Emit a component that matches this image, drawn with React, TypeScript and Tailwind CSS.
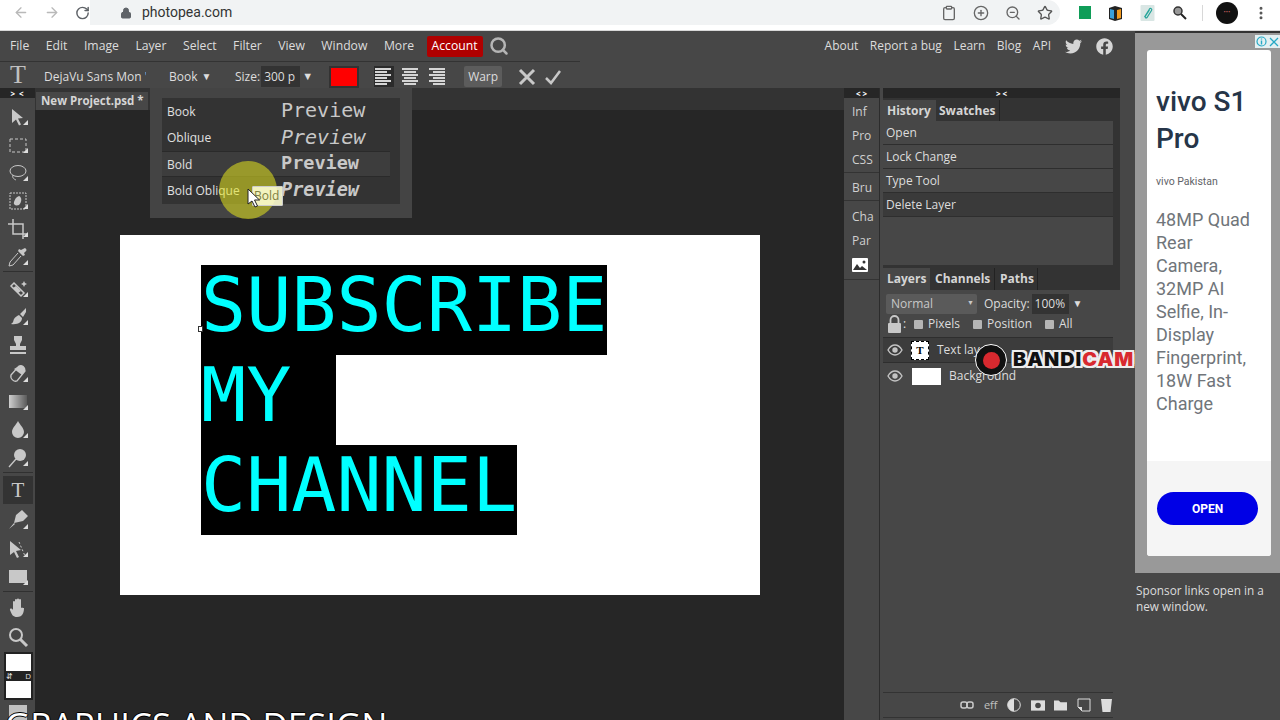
import React from "react";
import { ArrowLeft, ArrowRight, RotateCw, Lock, Clipboard, CirclePlus, ZoomOut, Star, EllipsisVertical, Search } from "lucide-react";
import { FaTwitter, FaFacebook } from "react-icons/fa";

const Corner = () => (
  <svg width="5" height="5" viewBox="0 0 5 5" className="absolute right-[5px] bottom-[6px]"><path d="M5 0V5H0Z" fill="#ddd" /></svg>
);

const Tool = ({ h = 28, mt = 0, corner = true, active = false, children }: { h?: number; mt?: number; corner?: boolean; active?: boolean; children: React.ReactNode }) => (
  <div style={{ height: h, marginTop: mt }} className={`relative w-[30px] ml-[3px] flex items-center justify-center ${active ? "bg-[#333333]" : ""}`}>
    <svg width="22" height="22" viewBox="0 0 22 22" fill="#c8c8c8">{children}</svg>
    {corner && <Corner />}
  </div>
);

const Sep = () => <div className="h-px bg-[#303030] w-[30px] ml-[3px]" />;

const menu = ["File", "Edit", "Image", "Layer", "Select", "Filter", "View", "Window", "More"];
const right = ["About", "Report a bug", "Learn", "Blog", "API"];

function AlignIcon({ type, dark }: { type: "l" | "c" | "r"; dark?: boolean }) {
  const rows = [16, 12, 16, 12, 16, 12];
  return (
    <div className={`w-[20px] h-[21px] flex flex-col justify-center gap-[1px] px-[1px] ${type === "l" ? "items-start" : type === "c" ? "items-center" : "items-end"} ${dark ? "bg-[#2b2b2b]" : ""}`}>
      {rows.map((w, i) => (
        <div key={i} style={{ width: w }} className="h-[2px] bg-[#d5d5d5]" />
      ))}
    </div>
  );
}

function Eye() {
  return (
    <svg width="16" height="12" viewBox="0 0 16 12" className="shrink-0">
      <path d="M1 6C3 2.5 5.5 1 8 1s5 1.500 7 5c-2 3.500-4.500 5-7 5S3 9.500 1 6Z" fill="none" stroke="#c4c4c4" strokeWidth="1.400" />
      <circle cx="8" cy="6" r="2.700" fill="#c4c4c4" />
    </svg>
  );
}

const Check = ({ label, w }: { label: string; w: string }) => (
  <div className={`flex items-center gap-[5px] ${w}`}>
    <div className="w-[9px] h-[9px] bg-[#b5b5b5] rounded-[1px]" />
    <span>{label}</span>
  </div>
);

export default function App() {
  return (
    <div className="relative w-[1280px] h-[720px] overflow-hidden flex flex-col bg-[#474747] font-['Open_Sans','Liberation_Sans',sans-serif] text-[#dddddd] text-[12.500px]">
      {/* Browser bar */}
      <div className="h-[31px] shrink-0 bg-white flex items-start border-b border-[#d8d8d8]">
        <div className="h-[25px] flex items-center pl-[13px] w-[90px] gap-[15px] shrink-0">
          <ArrowLeft size={17} color="#b9b9b9" strokeWidth={2} />
          <ArrowRight size={17} color="#b9b9b9" strokeWidth={2} />
          <RotateCw size={16} color="#5f6368" strokeWidth={2.300} />
        </div>
        <div className="h-[25px] w-[970px] bg-[#f1f3f4] rounded-r-[13px] flex items-center pl-[30px] pr-[7px] font-['Roboto',sans-serif] text-[14px] text-[#333333] relative">
          <Lock size={12} color="#5f6368" fill="#5f6368" className="absolute left-[30px]" />
          <span className="ml-[22px]">photopea.com</span>
          <div className="ml-auto flex items-center gap-[16px]">
            <Clipboard size={16} color="#666666" />
            <CirclePlus size={16} color="#666666" />
            <ZoomOut size={16} color="#666666" />
            <Star size={16} color="#555555" />
          </div>
        </div>
        <div className="h-[25px] flex-1 flex items-center pl-[19px] gap-[17px]">
          <div className="w-[12px] h-[13px] bg-[#0f9d58]" />
          <svg width="15" height="16" viewBox="0 0 15 16" className="shrink-0"><path d="M1 3l6-2 7 2v11l-7 2-6-2Z" fill="#222" /><path d="M2 4l4 1v9l-4-1Z" fill="#3aa0dc" /><path d="M9 5l4-1v9l-4 1Z" fill="#f29a1f" /></svg>
          <svg width="15" height="16" viewBox="0 0 14 16" className="shrink-0"><rect width="14" height="16" rx="1" fill="#d9e6e4" /><path d="M4 12l5-8c1-1.500 3 0 2 1.500L6.500 12.500c-1 1-2.500 0-1.500-1.500L9 5" fill="none" stroke="#27a59a" strokeWidth="1.200" /></svg>
          <svg width="15" height="15" viewBox="0 0 15 15" className="shrink-0"><circle cx="6" cy="6" r="4" fill="#999" stroke="#333" strokeWidth="1.500" /><path d="M9 9l5 5" stroke="#222" strokeWidth="2" /></svg>
          <div className="w-px h-[16px] bg-[#d8d8d8] shrink-0 ml-[-2px]" />
          <div className="w-[22px] h-[22px] rounded-full bg-[#111111] ml-[-4px] shrink-0 overflow-hidden flex items-center justify-center text-[6px] text-[#c05a5a]">•••</div>
          <EllipsisVertical size={16} color="#555555" strokeWidth={2.500} className="ml-[-2px] shrink-0" />
        </div>
      </div>

      <div className="flex-1 flex min-h-0">
        {/* Photopea */}
        <div className="w-[1135px] shrink-0 flex flex-col bg-[#474747]">
          {/* Menu */}
          <div className="h-[30px] shrink-0 flex items-center pl-[10px] pr-[22px] text-[12.200px]">
            <div className="flex items-center gap-[16.500px]">
              {menu.map((m) => <span key={m}>{m}</span>)}
            </div>
            <span className="ml-[12.500px] bg-[#b00000] text-white rounded-[2px] h-[21px] px-[5px] flex items-center">Account</span>
            <Search size={20} color="#b5b5b5" strokeWidth={3} className="ml-[6px]" />
            <div className="ml-auto flex items-center gap-[11.500px] text-[12px]">
              {right.map((m) => <span key={m}>{m}</span>)}
              <FaTwitter size={17} color="#d5d5d5" className="ml-[2px]" />
              <FaFacebook size={17} color="#d5d5d5" className="ml-[3px]" />
            </div>
          </div>
          {/* Options */}
          <div className="h-[27px] pt-[3px] shrink-0 flex items-center border-t border-[#333333] w-[580px] text-[12px] relative">
            <span className="ml-[10px] font-['Liberation_Serif',serif] text-[26px] text-[#c0c0c0] leading-none w-[34px] mt-[-3px]">T</span>
            <span className="w-[125px]"><span className="block w-[102px] overflow-hidden whitespace-nowrap">DejaVu Sans Mon '</span></span>
            <span className="w-[66px] flex items-center gap-[4px]">Book <span className="text-[10px]">▼</span></span>
            <span>Size:</span>
            <span className="ml-[1px] h-[21px] w-[39px] bg-[#333333] flex items-center pl-[3px] overflow-hidden whitespace-nowrap">300 p</span>
            <span className="ml-[2px] text-[11px] w-[27px]">▼</span>
            <div className="w-[30px] h-[22px] bg-[#333333] flex items-center justify-center mr-[15px]"><div className="w-[26px] h-[18px] bg-[#ff0000]" /></div>
            <AlignIcon type="l" dark />
            <div className="w-[6px]" />
            <AlignIcon type="c" />
            <div className="w-[6px]" />
            <AlignIcon type="r" />
            <span className="ml-[18px] bg-[#5c5c5c] rounded-[2px] h-[21px] w-[38px] flex items-center justify-center">Warp</span>
            <svg width="18" height="18" viewBox="0 0 18 18" className="ml-[16px] shrink-0"><path d="M2 2l14 14M16 2L2 16" stroke="#c8c8c8" strokeWidth="3" /></svg>
            <svg width="18" height="16" viewBox="0 0 18 16" className="ml-[8px] shrink-0"><path d="M2 9l5 5L16 2" fill="none" stroke="#c8c8c8" strokeWidth="2.500" /></svg>
          </div>

          <div className="flex-1 flex min-h-0">
            {/* Tools */}
            <div className="w-[35px] shrink-0 bg-[#474747] flex flex-col overflow-hidden">
              <div className="h-[10px] bg-[#262626] text-[8px] leading-[12px] overflow-hidden font-bold text-center tracking-[1px] text-white w-[35px] shrink-0">{"> <"}</div>
              <div className="h-[5px] shrink-0" />
              <Tool><path d="M5 3l11 9-5 .5 3 6-2 1-3-6-4 3.500Z" /></Tool>
              <Tool><rect x="3" y="5" width="16" height="13" fill="none" stroke="#c8c8c8" strokeDasharray="3 2" /></Tool>
              <Tool><ellipse cx="11" cy="9" rx="8" ry="5.500" fill="none" stroke="#c8c8c8" /><path d="M6 13c-1 3 1 4 3 5" fill="none" stroke="#c8c8c8" /></Tool>
              <Tool><rect x="3" y="3" width="16" height="16" fill="none" stroke="#c8c8c8" strokeDasharray="2 1" /><path d="M12 6c3 1 3 6 0 9-3 1-6 0-5-3s2-5 5-6Z" /></Tool>
              <Tool><path d="M6 1v15h15M1 6h15v15" fill="none" stroke="#c8c8c8" strokeWidth="1.500" /></Tool>
              <Tool><path d="M18 2c2 1 2 3 0 4l-1 1 1 2-2 1-5-5 1-2 2 1Z" /><path d="M11 7L3 16l-1 4 4-1 8-9" fill="none" stroke="#c8c8c8" /></Tool>
              <Sep />
              <Tool mt={3}><path d="M7 5l10 10-3 3L4 8Z" fill="none" stroke="#c8c8c8" strokeWidth="1.500" /><path d="M9 8l5 5-3 2-5-5Z" /><path d="M17 3l1 2 2 1-2 1-1 2-1-2-2-1 2-1Z" /></Tool>
              <Tool><path d="M19 2l-6 6 3 3 3-5ZM12 9l3 3c0 4-4 7-11 6 3-2 2-3 3-5s3-3 5-4Z" /></Tool>
              <Tool corner={false}><path d="M7 2h8v4l-2 4v2h6v4H3v-4h6v-2L7 6ZM3 18h16v2H3Z" /></Tool>
              <Tool h={29}><path d="M4 12l8-9c3-1 6 1 6 5l-8 10c-3 1-7-2-6-6Z" fill="none" stroke="#c8c8c8" strokeWidth="1.300" /><path d="M12 3c3-1 6 1 6 5l-3 4-8-6Z" /></Tool>
              <Tool><defs><linearGradient id="g"><stop offset="0" stopColor="#cfcfcf" /><stop offset="1" stopColor="#5a5a5a" /></linearGradient></defs><rect x="2" y="4" width="18" height="13" fill="url(#g)" /></Tool>
              <Tool><path d="M11 2c2 4 6 7 6 11a6 6 0 0 1-12 0c0-4 4-7 6-11Z" /></Tool>
              <Tool><circle cx="13" cy="8" r="6" /><path d="M9 12l-7 8" stroke="#c8c8c8" strokeWidth="1.300" /></Tool>
              <Sep />
              <Tool mt={3} corner={false} active><text x="11" y="18" textAnchor="middle" fontFamily="Liberation Serif" fontSize="21" fill="#c8c8c8">T</text></Tool>
              <Tool mt={1} h={30}><path d="M15 1l6 6-5 5-9 2-5 6 6-5-1-1 2-8Z" /></Tool>
              <Tool><path d="M3 3l11 9-5 1 3 6-2 1-3-6-4 3Z" /><path d="M12 4l6 14" stroke="#c8c8c8" strokeDasharray="2 2" /></Tool>
              <Tool><rect x="2" y="4" width="18" height="13" /></Tool>
              <Sep />
              <Tool mt={1} h={30} corner={false}><path d="M6 11V5a1 1 0 0 1 2 0V3a1 1 0 0 1 2 0v-.500a1 1 0 0 1 2 0V3a1 1 0 0 1 2 0v10a1 1 0 0 1 2-2h1c0 4-1 9-7 9-4 0-5-2-7-7-.5-2 2-2 3 0Z" /></Tool>
              <Tool corner={false}><circle cx="9" cy="9" r="6" fill="none" stroke="#c8c8c8" strokeWidth="2" /><path d="M13 13l7 7" stroke="#c8c8c8" strokeWidth="3" /></Tool>
              <div className="mt-[1px] ml-[4px] w-[29px] h-[48px] shrink-0 bg-[#222222] p-[2px] flex flex-col justify-between relative">
                <div className="h-[17px] bg-white" />
                <div className="h-[17px] bg-white" />
                <span className="absolute left-[2px] top-[19px] text-[8px] leading-[9px] text-[#dddddd] flex w-[25px] justify-between"><span>⇵</span><span>D</span></span>
              </div>
              <div className="mt-[5px] ml-[9px] w-[18px] h-[15px] shrink-0 bg-[#c0c0c0]" />
            </div>

            {/* Document */}
            <div className="w-[809px] shrink-0 flex flex-col bg-[#262626] min-w-0">
              <div className="h-[22px] shrink-0 bg-[#333333] pt-[4px] pl-[1px]">
                <div className="h-[18px] w-[112px] bg-[#474747] pl-[5px] text-[11.500px] leading-[17px] font-bold text-[#d5d5d5] whitespace-nowrap">New Project.psd *</div>
              </div>
              <div className="pl-[85px] pt-[125px]">
                <div className="relative w-[640px] h-[360px] bg-white pl-[81px] pt-[30px] flex flex-col items-start font-['DejaVu_Sans_Mono',monospace] text-[75px] leading-[80px] text-[#00ffff]">
                  <div className="bg-black h-[90px] whitespace-pre">SUBSCRIBE</div>
                  <div className="bg-black h-[90px] whitespace-pre">MY </div>
                  <div className="bg-black h-[90px] whitespace-pre">CHANNEL</div>
                  <div className="absolute left-[78px] top-[91px] w-[5px] h-[6px] border border-[#333333] bg-white" />
                </div>
              </div>
            </div>

            {/* Collapsed panel */}
            <div className="w-[36px] shrink-0 flex flex-col border-r border-[#2c2c2c] text-[12px] text-[#d0d0d0]">
              <div className="h-[10px] bg-[#262626] text-[8px] leading-[12px] overflow-hidden font-bold text-center text-white">{"< >"}</div>
              <div className="h-[75px] flex flex-col pl-[8px] pt-[2px] border-b border-[#333333]">
                <div className="h-[24px] flex items-center">Inf</div>
                <div className="h-[24px] flex items-center">Pro</div>
                <div className="h-[24px] flex items-center">CSS</div>
              </div>
              <div className="h-[28px] pt-[3px] flex items-center pl-[8px] border-b border-[#333333]">Bru</div>
              <div className="h-[79px] flex flex-col pl-[8px] pt-[4px] border-b border-[#333333]">
                <div className="h-[24px] flex items-center">Cha</div>
                <div className="h-[24px] flex items-center">Par</div>
                <svg width="16" height="14" viewBox="0 0 16 14" className="mt-[5px]"><rect width="16" height="14" rx="1" fill="#fff" /><path d="M1 12l4-6 3 4 2-2 5 4Z" fill="#333" /><circle cx="12" cy="4" r="1.500" fill="#333" /></svg>
              </div>
            </div>

            {/* Right panels */}
            <div className="w-[240px] shrink-0 flex flex-col">
              <div className="h-[10px] ml-[3px] bg-[#262626] text-[8px] leading-[12px] overflow-hidden font-bold text-center text-white">{"> <"}</div>
              <div className="h-[23px] pt-[2px] ml-[3px] bg-[#333333] flex font-bold text-[12px] text-[#d5d5d5]">
                <div className="w-[53px] bg-[#474747] flex items-center pl-[4px]">History</div>
                <div className="w-[64px] flex items-center pl-[3px] border-r border-[#222222]">Swatches</div>
              </div>
              <div className="h-[144px] flex">
                <div className="ml-[3px] w-[230px] flex flex-col text-[12px]">
                  {["Open", "Lock Change", "Type Tool"].map((t) => (
                    <div key={t} className="h-[24px] flex items-center pl-[3px] border-b border-[#2e2e2e]">{t}</div>
                  ))}
                  <div className="h-[24px] flex items-center pl-[3px] border-b border-[#2e2e2e] bg-[#3a3a3a]">Delete Layer</div>
                </div>
                <div className="w-[7px] bg-[#333333]" />
              </div>
              <div className="h-[25px] ml-[3px] bg-[#333333] pt-[3px] flex font-bold text-[12px] text-[#d5d5d5]">
                <div className="w-[47px] bg-[#474747] flex items-center pl-[4px]">Layers</div>
                <div className="w-[65px] flex items-center pl-[5px] border-r border-[#222222]">Channels</div>
                <div className="w-[43px] flex items-center pl-[5px] border-r border-[#222222]">Paths</div>
              </div>
              <div className="flex-1 min-h-0 flex flex-col text-[12px] pl-[3px] pr-[7px]">
                <div className="h-[26px] flex items-center pl-[3px] pt-[1px]">
                  <div className="w-[91px] h-[20px] bg-[#5a5a5a] rounded-[2px] flex items-center pl-[5px] relative text-[#c8c8c8]">
                    Normal<span className="absolute right-[3px] text-[7px]">▼</span>
                  </div>
                  <span className="ml-[7px]">Opacity:</span>
                  <span className="ml-[2px] w-[37px] h-[20px] bg-[#333333] flex items-center pl-[3px]">100%</span>
                  <span className="ml-[4px] text-[10px]">▼</span>
                </div>
                <div className="h-[16px] flex items-center pl-[4px]">
                  <svg width="15" height="18" viewBox="0 0 15 18" className="shrink-0"><path d="M3.500 8V5a4 4 0 0 1 8 0v3" fill="none" stroke="#c8c8c8" strokeWidth="1.800" /><rect x="1" y="8" width="13" height="10" rx="1" fill="#c8c8c8" /></svg>
                  <span className="ml-[1px] w-[11px]">:</span>
                  <Check label="Pixels" w="w-[59px]" />
                  <Check label="Position" w="w-[72px]" />
                  <Check label="All" w="" />
                </div>
                <div className="h-[26px] mt-[5px] bg-[#3c3c3c] border-y border-[#2e2e2e] flex items-center pl-[4px]">
                  <Eye />
                  <div className="ml-[8px] w-[18px] h-[19px] bg-white border border-dashed border-black flex items-center justify-center font-['Liberation_Serif',serif] font-bold text-[11px] text-black">T</div>
                  <span className="ml-[8px]">Text layer</span>
                </div>
                <div className="h-[26px] flex items-center pl-[4px]">
                  <Eye />
                  <div className="ml-[9px] w-[29px] h-[17px] bg-white" />
                  <span className="ml-[8px]">Background</span>
                </div>
                <div className="flex-1" />
                <div className="h-[26px] mb-[2px] border-y border-[#333333] flex items-center justify-end gap-[9.500px]">
                  <svg width="14" height="8" viewBox="0 0 14 8"><rect x="1" y="1" width="6" height="6" rx="2" fill="none" stroke="#ccc" strokeWidth="1.500" /><rect x="7" y="1" width="6" height="6" rx="2" fill="none" stroke="#ccc" strokeWidth="1.500" /></svg>
                  <span className="text-[11px] text-[#c0c0c0]">eff</span>
                  <svg width="14" height="14" viewBox="0 0 14 14"><circle cx="7" cy="7" r="6.300" fill="none" stroke="#ddd" /><path d="M7 .7a6.300 6.300 0 0 0 0 12.600Z" fill="#ddd" /></svg>
                  <svg width="14" height="11" viewBox="0 0 15 11"><rect width="15" height="11" fill="#ddd" /><circle cx="7.500" cy="5.500" r="3" fill="#474747" /></svg>
                  <svg width="13" height="11" viewBox="0 0 14 11"><path d="M0 0h5l2 2h7v9H0Z" fill="#ddd" /></svg>
                  <svg width="14" height="14" viewBox="0 0 14 14"><path d="M1 1h12v12H5L1 9Z" fill="none" stroke="#ddd" /><path d="M1 9h4v4" fill="#ddd" /></svg>
                  <svg width="13" height="14" viewBox="0 0 13 14"><path d="M1 1h11l-1.500 13h-8Z" fill="#ddd" /></svg>
                </div>
              </div>
            </div>
            <div className="w-[15px] shrink-0" />
          </div>
        </div>

        {/* Ad column */}
        <div className="flex-1 flex flex-col font-['Roboto',sans-serif]">
          <div className="h-[2px] bg-[#333333]" />
          <div className="h-[540px] bg-[#999999] pt-[17px] pl-[12px] relative">
            <div className="w-[124px] h-[506px] bg-white rounded-[3px] flex flex-col">
              <div className="pl-[9px] pt-[33px]">
                <div className="text-[28px] leading-[37px] font-medium text-[#263548]">vivo S1<br />Pro</div>
                <div className="mt-[18px] text-[10.500px] leading-[14px] text-[#5f6368]">vivo Pakistan</div>
                <div className="mt-[19px] text-[18px] leading-[23px] text-[#70757a]">48MP Quad<br />Rear<br />Camera,<br />32MP AI<br />Selfie, In-<br />Display<br />Fingerprint,<br />18W Fast<br />Charge</div>
              </div>
              <div className="mt-auto h-[95px] bg-[#f5f5f5] flex items-start pt-[31px] pl-[10px] rounded-b-[3px]">
                <div className="w-[101px] h-[33px] rounded-full bg-[#0000e6] text-white text-[12px] font-bold flex items-center justify-center">OPEN</div>
              </div>
            </div>
            <div className="absolute right-0 top-[2px] h-[13px] w-[25px] bg-[#e4f0f2] flex items-center justify-between px-[1px]">
              <svg width="11" height="11" viewBox="0 0 11 11"><circle cx="5.500" cy="5.500" r="4.500" fill="none" stroke="#27a9c5" strokeWidth="1.200" /><path d="M5.500 4.500v4M5.500 2.500v1" stroke="#27a9c5" strokeWidth="1.400" /></svg>
              <svg width="10" height="10" viewBox="0 0 10 10"><path d="M1 1l8 8M9 1L1 9" stroke="#27a9c5" strokeWidth="1.300" /></svg>
            </div>
          </div>
          <div className="pl-[1px] pt-[9px] text-[11.800px] leading-[16px] text-[#dddddd] font-['Open_Sans',sans-serif]">Sponsor links open in a new window.</div>
        </div>
      </div>

      {/* Font menu */}
      <div className="absolute left-[150px] top-[88px] w-[262px] h-[130px] bg-[#444444] pl-[12px] pt-[10px] pr-[12px]">
        <div className="w-[238px] h-[106px] bg-[#333333] flex flex-col text-[12px] text-[#e0e0e0]">
          {[
            ["Book", "text-[20px] font-normal not-italic", 26],
            ["Oblique", "text-[20px] font-normal italic", 27],
            ["Bold", "text-[18.500px] font-bold not-italic", 26],
            ["Bold Oblique", "text-[18.500px] font-bold italic", 27],
          ].map(([n, c, h]) => (
            <div key={n as string} style={{ height: h as number }} className={`flex items-center pl-[5px] mr-[10px] ${n === "Bold" ? "bg-[#3d3d3d] border-y border-[#2a2a2a]" : ""}`}>
              <span className="w-[114px] whitespace-nowrap pt-[1px]">{n}</span>
              <span className={`font-['DejaVu_Sans_Mono',monospace] pb-[2px] text-[#c8c8c8] ${c}`}>Preview</span>
            </div>
          ))}
        </div>
      </div>

      {/* Cursor highlight */}
      <div className="absolute left-[219px] top-[161px] w-[58px] h-[58px] rounded-full bg-[#e6e61e]/55" />
      <div className="absolute left-[252px] top-[186px] h-[20px] w-[31px] bg-[#fdfdd0]/90 border border-[#cccccc] rounded-[1px] text-[12px] text-[#808040] pl-[1px] leading-[18px]">Bold</div>
      <svg width="14" height="20" viewBox="0 0 14 20" className="absolute left-[247px] top-[188px]"><path d="M1 1v15l4-3 3 6 2.500-1-3-6h5Z" fill="#fff" stroke="#222" strokeWidth="1" /></svg>

      {/* Bandicam watermark */}
      <div className="absolute left-[975px] top-[344px] w-[32px] h-[32px] rounded-full bg-[#111111] border-[1.500px] border-white flex items-center justify-center">
        <div className="w-[17px] h-[17px] rounded-full bg-[#d8292f]" />
      </div>
      <div className="absolute left-[1013px] top-[349px] h-[21px] flex items-center origin-left scale-x-[1.040] font-['Inter',sans-serif] font-black text-[19px] leading-none tracking-[1px] text-[#111111] [text-shadow:2px_0_0_#eeeeee,-2px_0_0_#eeeeee,0_2px_0_#eeeeee,0_-2px_0_#eeeeee,2px_2px_0_#eeeeee,-2px_2px_0_#eeeeee,2px_-2px_0_#eeeeee,-2px_-2px_0_#eeeeee]">
        BANDI<span className="text-[#d8292f]">CAM</span>
      </div>

      {/* Video caption */}
      <div className="absolute left-[5px] top-[704px] h-[16px] overflow-hidden whitespace-nowrap font-['Open_Sans',sans-serif] text-[34.800px] leading-[42px] text-white [text-shadow:1px_0_0_#000000,-1px_0_0_#000000,0_1px_0_#000000,0_-1px_0_#000000]">GRAPHICS AND DESIGN</div>
    </div>
  );
}
